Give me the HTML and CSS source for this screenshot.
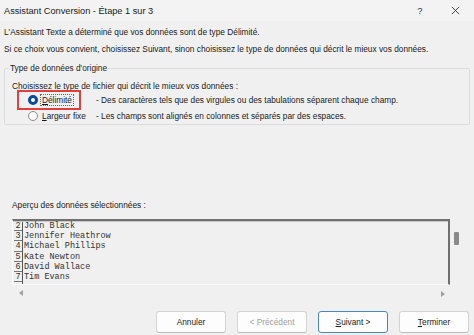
FILE: index.html
```html
<!doctype html>
<html lang="fr">
  <head>
    <meta charset="UTF-8" />
    <meta name="viewport" content="width=device-width, initial-scale=1.0" />
    <title>Assistant Conversion</title>
    <link rel="stylesheet" href="styles.css">
  </head>
  <body>
    <div class="dialog">
      <header class="titlebar">
        <span class="title">Assistant Conversion - Étape 1 sur 3</span>
        <span class="tb-btn">?</span>
        <span class="tb-btn">
          <svg width="9" height="9" viewBox="0 0 10 10"><path d="M1 1 L9 9 M9 1 L1 9" stroke="#333" stroke-width="1" fill="none"/></svg>
        </span>
      </header>

      <p class="line">L'Assistant Texte a déterminé que vos données sont de type Délimité.</p>
      <p class="line">Si ce choix vous convient, choisissez Suivant, sinon choisissez le type de données qui décrit le mieux vos données.</p>

      <fieldset class="group">
        <legend>Type de données d'origine</legend>
        <p class="ask">Choisissez le type de fichier qui décrit le mieux vos données :</p>
        <div class="choice">
          <label class="opt highlight">
            <span class="radio checked"></span>
            <span class="focus"><u>D</u>élimité</span>
          </label>
          <span class="desc">- Des caractères tels que des virgules ou des tabulations séparent chaque champ.</span>
        </div>
        <div class="choice">
          <label class="opt">
            <span class="radio"></span>
            <span><u>L</u>argeur fixe</span>
          </label>
          <span class="desc">- Les champs sont alignés en colonnes et séparés par des espaces.</span>
        </div>
      </fieldset>

      <p class="preview-label">Aperçu des données sélectionnées :</p>
      <div class="preview-wrap">
        <div class="preview">
          <div class="row"><span class="num">2</span>John Black</div>
          <div class="row"><span class="num">3</span>Jennifer Heathrow</div>
          <div class="row"><span class="num">4</span>Michael Phillips</div>
          <div class="row"><span class="num">5</span>Kate Newton</div>
          <div class="row"><span class="num">6</span>David Wallace</div>
          <div class="row"><span class="num">7</span>Tim Evans</div>
        </div>
        <div class="vscroll"><span class="thumb"></span></div>
      </div>
      <div class="hscroll">
        <span class="arrow left"></span>
        <span class="arrow right"></span>
      </div>

      <footer class="buttons">
        <button class="btn">Annuler</button>
        <button class="btn" disabled>&lt; Précédent</button>
        <button class="btn default"><u>S</u>uivant &gt;</button>
        <button class="btn"><u>T</u>erminer</button>
      </footer>
    </div>
  </body>
</html>
```

FILE: styles.css
```css
* {
  box-sizing: border-box;
}

body {
  margin: 0;
  background: #f0f0f0;
}

.dialog {
  width: 474px;
  height: 335px;
  overflow: hidden;
  display: flex;
  flex-direction: column;
  background: #f0f0f0;
  color: #1a1a1a;
  font-family: "Liberation Sans", Arial, sans-serif;
  font-size: 8.3px;
  white-space: nowrap;
}

p {
  margin: 0;
}

.titlebar {
  display: flex;
  align-items: center;
  height: 21px;
  padding: 0 1.5px 0 4px;
  background: #f3f3f3;
}

.title {
  flex: 1;
  font-size: 9.2px;
}

.tb-btn {
  width: 35px;
  display: flex;
  justify-content: center;
  font-size: 9.5px;
  color: #333;
}

.line {
  padding-left: 4px;
  line-height: 17px;
}

.line:first-of-type {
  margin-top: 2.5px;
}

/* group box */
.group {
  margin: 4.5px 4px 0;
  padding: 0 0 0 4px;
  border: 1px solid #dcdcdc;
  border-radius: 2px;
}

.group legend {
  padding: 0 1px;
  line-height: 12px;
}

.ask {
  margin: 6px 0 0 3px;
  line-height: 12px;
}

.choice {
  display: flex;
  align-items: center;
  height: 16px;
  padding-left: 10px;
}

.opt {
  width: 60px;
  height: 16px;
  display: flex;
  align-items: center;
  gap: 4px;
  padding-left: 9px;
}

.opt.highlight {
  outline: 2px solid #e0403b;
}

.focus {
  outline: 1px dotted #666;
  padding: 0 1px;
  margin-left: -1px;
}

.radio {
  width: 10px;
  height: 10px;
  border-radius: 50%;
  border: 1px solid #8a8a8a;
  background: #fbfbfb;
  flex: none;
}

.radio.checked {
  border: 3px solid #0b4a98;
  background: #fff;
}

.desc {
  margin-left: 17px;
}

/* preview */
.preview-label {
  margin: 74px 0 0 12px;
  line-height: 12px;
}

.preview-wrap {
  display: flex;
  margin: 8px 0 0 12px;
}

.preview {
  width: 438px;
  height: 66px;
  border-top: 2px solid #707070;
  border-right: 2px solid #707070;
  border-left: 1px solid #fafafa;
  border-bottom: 1px solid #fafafa;
  box-shadow: inset 0 1px 0 #c8c8c8;
  font-family: "Liberation Mono", "Courier New", monospace;
  font-size: 8.5px;
  color: #333;
  background: linear-gradient(to right, transparent 9px, #555 9px, #555 10px, transparent 10px);
}

.row {
  display: flex;
  height: 10.2px;
  line-height: 10.2px;
}

.num {
  width: 8px;
  margin: 0 2px 0 1px;
  text-align: center;
  border-bottom: 1px solid #777;
}

.vscroll {
  width: 14px;
  padding: 13px 0 0 4px;
}

.thumb {
  display: block;
  width: 5px;
  height: 13px;
  border-radius: 1px;
  background: #8a8a8a;
}

.hscroll {
  display: flex;
  justify-content: space-between;
  padding: 5px 29px 0 19px;
}

.arrow {
  width: 0;
  height: 0;
  border-top: 3px solid transparent;
  border-bottom: 3px solid transparent;
}

.arrow.left {
  border-right: 4px solid #a0a0a0;
}

.arrow.right {
  border-left: 4px solid #a0a0a0;
  margin-top: 1px;
}

/* buttons */
.buttons {
  margin-top: auto;
  display: flex;
  justify-content: flex-end;
  gap: 11px;
  padding: 0 5px 2px 0;
}

.btn {
  width: 70px;
  height: 22px;
  padding: 0;
  border: 1px solid #d3d3d3;
  border-bottom-color: #bdbdbd;
  border-radius: 3px;
  background: #fdfdfd;
  color: #1a1a1a;
  font: inherit;
}

.btn:disabled {
  color: #9d9d9d;
}

.btn.default {
  border-color: #4a86c0;
}
```
